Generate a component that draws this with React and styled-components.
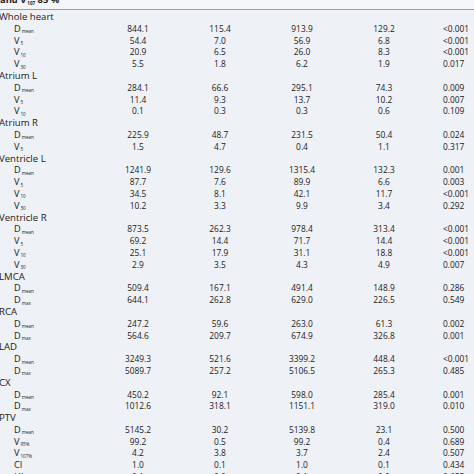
import React from "react";
import styled, { createGlobalStyle } from "styled-components";

const GlobalStyle = createGlobalStyle`
  html, body {
    margin: 0;
    padding: 0;
    background: #eef1f6;
  }
  body {
    font-family: "Open Sans", "Liberation Sans", sans-serif;
    color: #232121;
  }
`;

const Page = styled.div`
  width: 474px;
  height: 474px;
  overflow: hidden;
  background: #eef1f6;
`;

const Caption = styled.div`
  background: #f5f6f9;
  height: 9px;
  border-bottom: 1px solid #9b9ea4;
  overflow: hidden;
  & > span {
    display: block;
    margin-top: -6px;
    font-size: 9.4px;
    font-weight: bold;
    line-height: 12px;
    white-space: nowrap;
  }
`;

const Body = styled.div`
  padding-top: 1px;
`;

const Row = styled.div`
  display: grid;
  grid-template-columns: 97px 82px 82px 82px 82px 1fr;
  height: 11.8px;
  align-items: center;
  font-size: 8.4px;
  line-height: 11.8px;
  white-space: nowrap;
`;

const Label = styled.div`
  font-size: ${(p) => (p.$sub ? "9.2px" : "9.6px")};
  padding-left: ${(p) => (p.$sub ? "14px" : "0")};
  margin-left: ${(p) => (p.$sub ? "0" : "-1px")};
`;

const Num = styled.div`
  text-align: center;
`;

const PVal = styled.div`
  padding-left: 18px;
`;

const Sub = styled.sub`
  font-size: 4.6px;
  vertical-align: -1.5px;
  line-height: 0;
  margin-left: 1px;
`;

const groups = [
  {
    name: "Whole heart",
    rows: [
      ["D", "mean", "844.1", "115.4", "913.9", "129.2", "<0.001"],
      ["V", "5", "54.4", "7.0", "56.9", "6.8", "<0.001"],
      ["V", "10", "20.9", "6.5", "26.0", "8.3", "<0.001"],
      ["V", "30", "5.5", "1.8", "6.2", "1.9", "0.017"],
    ],
  },
  {
    name: "Atrium L",
    rows: [
      ["D", "mean", "284.1", "66.6", "295.1", "74.3", "0.009"],
      ["V", "5", "11.4", "9.3", "13.7", "10.2", "0.007"],
      ["V", "10", "0.1", "0.3", "0.3", "0.6", "0.109"],
    ],
  },
  {
    name: "Atrium R",
    rows: [
      ["D", "mean", "225.9", "48.7", "231.5", "50.4", "0.024"],
      ["V", "5", "1.5", "4.7", "0.4", "1.1", "0.317"],
    ],
  },
  {
    name: "Ventricle L",
    rows: [
      ["D", "mean", "1241.9", "129.6", "1315.4", "132.3", "0.001"],
      ["V", "5", "87.7", "7.6", "89.9", "6.6", "0.003"],
      ["V", "10", "34.5", "8.1", "42.1", "11.7", "<0.001"],
      ["V", "30", "10.2", "3.3", "9.9", "3.4", "0.292"],
    ],
  },
  {
    name: "Ventricle R",
    rows: [
      ["D", "mean", "873.5", "262.3", "978.4", "313.4", "<0.001"],
      ["V", "5", "69.2", "14.4", "71.7", "14.4", "<0.001"],
      ["V", "10", "25.1", "17.9", "31.1", "18.8", "<0.001"],
      ["V", "30", "2.9", "3.5", "4.3", "4.9", "0.007"],
    ],
  },
  {
    name: "LMCA",
    rows: [
      ["D", "mean", "509.4", "167.1", "491.4", "148.9", "0.286"],
      ["D", "max", "644.1", "262.8", "629.0", "226.5", "0.549"],
    ],
  },
  {
    name: "RCA",
    rows: [
      ["D", "mean", "247.2", "59.6", "263.0", "61.3", "0.002"],
      ["D", "max", "564.6", "209.7", "674.9", "326.8", "0.001"],
    ],
  },
  {
    name: "LAD",
    rows: [
      ["D", "mean", "3249.3", "521.6", "3399.2", "448.4", "<0.001"],
      ["D", "max", "5089.7", "257.2", "5106.5", "265.3", "0.485"],
    ],
  },
  {
    name: "CX",
    rows: [
      ["D", "mean", "450.2", "92.1", "598.0", "285.4", "0.001"],
      ["D", "max", "1012.6", "318.1", "1151.1", "319.0", "0.010"],
    ],
  },
  {
    name: "PTV",
    rows: [
      ["D", "mean", "5145.2", "30.2", "5139.8", "23.1", "0.500"],
      ["V", "95%", "99.2", "0.5", "99.2", "0.4", "0.689"],
      ["V", "107%", "4.2", "3.8", "3.7", "2.4", "0.507"],
      ["CI", "", "1.0", "0.1", "1.0", "0.1", "0.434"],
      ["HI", "", "0.1", "0.0", "0.1", "0.0", "0.655"],
    ],
  },
];

export default function App() {
  return (
    <Page>
      <GlobalStyle />
      <Caption>
        <span>
          and V<Sub>107</Sub> 85 %
        </span>
      </Caption>
      <Body>
        {groups.map((g) => (
          <React.Fragment key={g.name}>
            <Row>
              <Label>{g.name}</Label>
            </Row>
            {g.rows.map(([sym, sub, a, b, c, d, p]) => (
              <Row key={g.name + sym + sub}>
                <Label $sub>
                  {sym}
                  {sub && <Sub>{sub}</Sub>}
                </Label>
                <Num>{a}</Num>
                <Num>{b}</Num>
                <Num>{c}</Num>
                <Num>{d}</Num>
                <PVal>{p}</PVal>
              </Row>
            ))}
          </React.Fragment>
        ))}
      </Body>
    </Page>
  );
}
